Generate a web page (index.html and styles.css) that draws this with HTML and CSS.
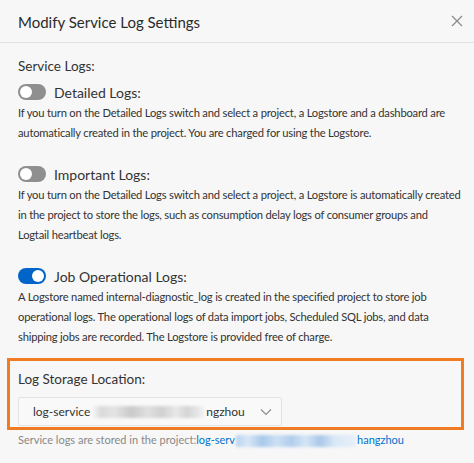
FILE: index.html
```html
<!DOCTYPE html>
<html>
<head>
<meta charset="utf-8">
<link rel="stylesheet" href="styles.css">
</head>
<body>
<div class="dialog">
  <div class="header">
    <div class="title">Modify Service Log Settings</div>
    <svg class="close" width="12" height="12" viewBox="0 0 12 12"><path d="M1 1L11 11M11 1L1 11" stroke="#8a8a8a" stroke-width="1.2" fill="none"/></svg>
  </div>
  <div class="body">
    <div class="section-label">Service Logs:</div>
    <div class="item">
      <div class="switch-row"><span class="switch off"><span class="knob"></span></span><span class="switch-label">Detailed Logs:</span></div>
      <p class="desc">If you turn on the Detailed Logs switch and select a project, a Logstore and a dashboard are<br>automatically created in the project. You are charged for using the Logstore.</p>
    </div>
    <div class="item">
      <div class="switch-row"><span class="switch off"><span class="knob"></span></span><span class="switch-label">Important Logs:</span></div>
      <p class="desc">If you turn on the Detailed Logs switch and select a project, a Logstore is automatically created<br>in the project to store the logs, such as consumption delay logs of consumer groups and<br>Logtail heartbeat logs.</p>
    </div>
    <div class="item">
      <div class="switch-row"><span class="switch on"><span class="knob"></span></span><span class="switch-label">Job Operational Logs:</span></div>
      <p class="desc">A Logstore named internal-diagnostic_log is created in the specified project to store job<br>operational logs. The operational logs of data import jobs, Scheduled SQL jobs, and data<br>shipping jobs are recorded. The Logstore is provided free of charge.</p>
    </div>
    <div class="storage">
      <div class="storage-label">Log Storage Location:</div>
      <div class="select">
        <span class="select-text">log-service<span class="blur grey"></span>ngzhou</span>
        <svg class="chevron" width="12" height="8" viewBox="0 0 12 8"><path d="M1 1.5L6 6.5L11 1.5" stroke="#8a8a8a" stroke-width="1.1" fill="none"/></svg>
      </div>
    </div>
    <div class="footer-note">Service logs are stored in the project:<span class="link">log-serv<span class="blur blue"></span>hangzhou</span></div>
  </div>
</div>
</body>
</html>
```

FILE: styles.css
```css
html, body {
  margin: 0;
  padding: 0;
  background: #f7f7f7;
}
body {
  font-family: Lato, "Open Sans", sans-serif;
  color: #333;
  width: 474px;
  height: 463px;
  overflow: hidden;
}
.dialog {
  width: 474px;
}
.header {
  height: 43px;
  border-bottom: 1px solid #e3e3e3;
  display: flex;
  align-items: center;
  justify-content: space-between;
  padding: 0 11px 0 18px;
  box-sizing: border-box;
}
.title {
  font-size: 15px;
  color: #2b2b2b;
  padding-top: 1px;
}
.body {
  padding: 14px 0 0 0;
}
.section-label {
  padding-left: 18px;
  font-size: 13.5px;
  line-height: 18px;
  color: #333;
}
.item {
  padding-left: 18px;
  padding-right: 0;
}
.item + .item {
  margin-top: 21px;
}
.switch-row {
  display: flex;
  align-items: center;
  margin-top: 7px;
  height: 20px;
}
.switch {
  width: 28px;
  height: 16px;
  border-radius: 8px;
  position: relative;
  display: inline-block;
  box-sizing: border-box;
}
.switch.off {
  background: #8f8f8f;
}
.switch.on {
  background: #0064c8;
}
.knob {
  position: absolute;
  top: 2px;
  width: 12px;
  height: 12px;
  border-radius: 50%;
  background: #fff;
}
.switch.off .knob { left: 2px; }
.switch.on .knob { right: 2px; }
.switch-label {
  margin-left: 8px;
  font-size: 14px;
  color: #333;
}
.desc {
  margin: 1px 0 0 0;
  font-size: 11.2px;
  letter-spacing: -0.2px;
  line-height: 20px;
  color: #333;
  white-space: nowrap;
}
.storage {
  margin: 11px 10px 0 7px;
  border: 3px solid #f07b22;
  padding: 9px 0 0 8px;
  height: 72px;
  box-sizing: border-box;
}
.storage-label {
  font-size: 13.5px;
  line-height: 18px;
  color: #333;
}
.select {
  margin-top: 9px;
  width: 264px;
  height: 29px;
  border: 1px solid #e3e3e3;
  border-radius: 2px;
  background: #f9f9f9;
  box-sizing: border-box;
  display: flex;
  align-items: center;
  justify-content: space-between;
  padding: 0 9px 0 14px;
}
.select-text {
  font-size: 12px;
  color: #333;
  display: flex;
  align-items: center;
}
.blur {
  display: inline-block;
  height: 12px;
  filter: blur(1.5px);
}
.blur.grey {
  width: 112px;
  margin: 0 2px;
  background: linear-gradient(90deg, #fafafa 0%, #d9d9d9 8%, #e4e4e4 20%, #c9c9c9 35%, #e0e0e0 50%, #cfcfcf 62%, #e8e8e8 75%, #d4d4d4 85%, #f2f2f2 100%);
}
.blur.blue {
  width: 120px;
  margin: 0 1px;
  vertical-align: middle;
  background: linear-gradient(90deg, #b8d3ef 0%, #d8e7f6 10%, #a8c8ea 22%, #cde0f4 34%, #b0ccec 46%, #d5e5f5 58%, #a9c7e9 70%, #d9e8f6 82%, #e7f0f9 100%);
}
.chevron {
  margin-top: 1px;
}
.footer-note {
  padding-left: 18px;
  margin-top: 0;
  font-size: 11px;
  line-height: 20px;
  color: #888;
}
.link {
  color: #0070cc;
}
```
